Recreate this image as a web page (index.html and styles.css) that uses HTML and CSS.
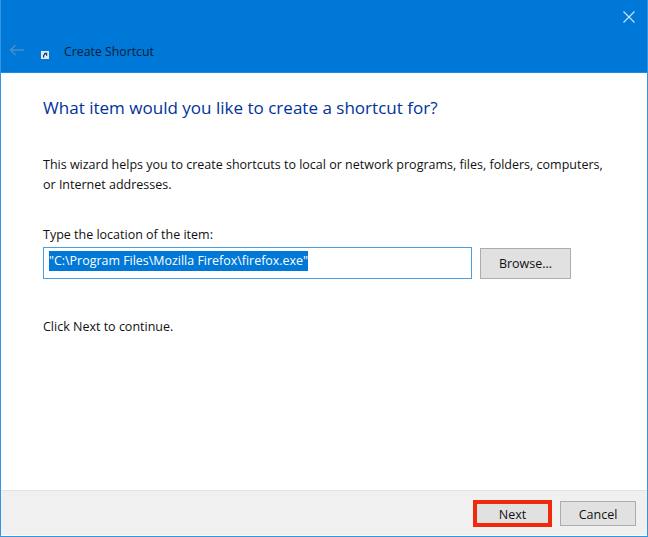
FILE: index.html
```html
<!DOCTYPE html>
<html lang="en">
<head>
<meta charset="utf-8">
<title>Create Shortcut</title>
<link rel="stylesheet" href="styles.css">
</head>
<body>
<div class="window">
  <header class="titlebar">
    <div class="close-row">
      <svg class="close-icon" width="12" height="12" viewBox="0 0 12 12"><path d="M0.5 0.5L11.5 11.5M11.5 0.5L0.5 11.5" stroke="#cfe4f7" stroke-width="1.1" fill="none"/></svg>
    </div>
    <div class="nav-row">
      <svg class="back-icon" width="16" height="12" viewBox="0 0 16 12"><path d="M15 6H1.5M6.5 1L1.5 6L6.5 11" stroke="#4a8fcc" stroke-width="1.3" fill="none"/></svg>
      <svg class="app-icon" width="8" height="8" viewBox="0 0 8 8"><rect width="8" height="8" fill="#dfe8f2"/><path d="M2.6 6.5V4.4L4.4 2.8M3.2 2.4H5.6V4.8" stroke="#10346e" stroke-width="1.2" fill="none"/></svg>
      <span class="window-title">Create Shortcut</span>
    </div>
  </header>
  <main class="content">
    <h1 class="heading">What item would you like to create a shortcut for?</h1>
    <p class="intro">This wizard helps you to create shortcuts to local or network programs, files, folders, computers, or Internet addresses.</p>
    <label class="field-label">Type the location of the item:</label>
    <div class="field-row">
      <div class="location-input"><span class="selection">"C:\Program Files\Mozilla Firefox\firefox.exe"</span></div>
      <button class="btn browse">Browse...</button>
    </div>
    <p class="hint">Click Next to continue.</p>
  </main>
  <footer class="footer">
    <button class="btn btn-next">Next</button>
    <button class="btn btn-cancel">Cancel</button>
  </footer>
</div>
</body>
</html>
```
FILE: styles.css
```css
* { box-sizing: border-box; }
html, body { margin: 0; height: 100%; }
body { font-family: "Open Sans", "Noto Sans", sans-serif; font-size: 12.5px; color: #111; background: #fff; }
.window {
  width: 648px; height: 537px; display: flex; flex-direction: column;
  border: 1px solid #2f96e6; border-top: 0; overflow: hidden;
}
.titlebar { height: 73px; margin: 0 -1px; background: #0078d7; border-bottom: 1px solid #1f8ae0; flex: none; }
.close-row { display: flex; justify-content: flex-end; padding: 11px 13px 0 0; height: 30px; }
.close-icon { display: block; }
.nav-row { display: flex; align-items: center; height: 24px; padding: 0 0 0 9px; margin-top: 9px; }
.back-icon { display: block; margin-top: -3px; }
.app-icon { display: block; margin: 8px 0 0 16px; }
.window-title { margin-left: 15px; font-size: 12.3px; color: #0c2038; }
.content { flex: 1; padding: 23px 42px 0; }
.heading { margin: 0; font-size: 17.04px; font-weight: 400; line-height: 24px; color: #003399; }
.intro { margin: 35px 0 0; width: 570px; line-height: 20px; }
.field-label { display: block; margin-top: 31px; line-height: 18px; }
.field-row { display: flex; align-items: flex-start; margin-top: 3px; }
.location-input { width: 429px; height: 32px; border: 1px solid #4a9fe0; padding: 3px 5px; }
.selection { display: inline-block; height: 20px; line-height: 19px; background: #0078d7; color: #fff; font-size: 12.44px; }
.btn { background: #e1e1e1; border: 1px solid #adadad; font: inherit; color: #111; padding: 0; }
.browse { width: 91px; height: 31px; margin-left: 8px; margin-top: 1px; }
.hint { margin: 39px 0 0; line-height: 18px; }
.footer {
  flex: none; height: 45px; margin-bottom: 1px; background: #f0f0f0; border-top: 1px solid #e3e3e3;
  display: flex; justify-content: flex-end; align-items: flex-start; gap: 8px; padding: 10px 11px 0 0;
}
.btn-cancel { width: 76px; height: 25px; padding-top: 1px; }
.btn-next { width: 79px; height: 27px; margin-top: -1px; border: 4px solid #f02a0c; padding-top: 1px; }
```
